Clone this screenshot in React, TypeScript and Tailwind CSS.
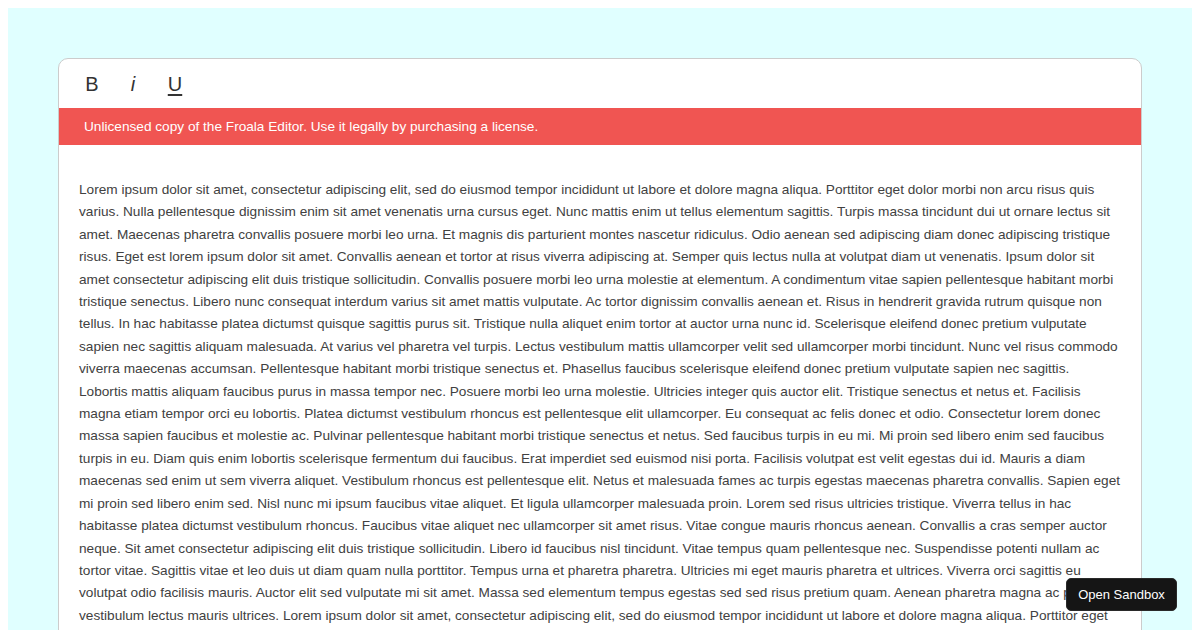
import React from "react";

const PARA =
  "Lorem ipsum dolor sit amet, consectetur adipiscing elit, sed do eiusmod tempor incididunt ut labore et dolore magna aliqua. Porttitor eget dolor morbi non arcu risus quis varius. Nulla pellentesque dignissim enim sit amet venenatis urna cursus eget. Nunc mattis enim ut tellus elementum sagittis. Turpis massa tincidunt dui ut ornare lectus sit amet. Maecenas pharetra convallis posuere morbi leo urna. Et magnis dis parturient montes nascetur ridiculus. Odio aenean sed adipiscing diam donec adipiscing tristique risus. Eget est lorem ipsum dolor sit amet. Convallis aenean et tortor at risus viverra adipiscing at. Semper quis lectus nulla at volutpat diam ut venenatis. Ipsum dolor sit amet consectetur adipiscing elit duis tristique sollicitudin. Convallis posuere morbi leo urna molestie at elementum. A condimentum vitae sapien pellentesque habitant morbi tristique senectus. Libero nunc consequat interdum varius sit amet mattis vulputate. Ac tortor dignissim convallis aenean et. Risus in hendrerit gravida rutrum quisque non tellus. In hac habitasse platea dictumst quisque sagittis purus sit. Tristique nulla aliquet enim tortor at auctor urna nunc id. Scelerisque eleifend donec pretium vulputate sapien nec sagittis aliquam malesuada. At varius vel pharetra vel turpis. Lectus vestibulum mattis ullamcorper velit sed ullamcorper morbi tincidunt. Nunc vel risus commodo viverra maecenas accumsan. Pellentesque habitant morbi tristique senectus et. Phasellus faucibus scelerisque eleifend donec pretium vulputate sapien nec sagittis. Lobortis mattis aliquam faucibus purus in massa tempor nec. Posuere morbi leo urna molestie. Ultricies integer quis auctor elit. Tristique senectus et netus et. Facilisis magna etiam tempor orci eu lobortis. Platea dictumst vestibulum rhoncus est pellentesque elit ullamcorper. Eu consequat ac felis donec et odio. Consectetur lorem donec massa sapien faucibus et molestie ac. Pulvinar pellentesque habitant morbi tristique senectus et netus. Sed faucibus turpis in eu mi. Mi proin sed libero enim sed faucibus turpis in eu. Diam quis enim lobortis scelerisque fermentum dui faucibus. Erat imperdiet sed euismod nisi porta. Facilisis volutpat est velit egestas dui id. Mauris a diam maecenas sed enim ut sem viverra aliquet. Vestibulum rhoncus est pellentesque elit. Netus et malesuada fames ac turpis egestas maecenas pharetra convallis. Sapien eget mi proin sed libero enim sed. Nisl nunc mi ipsum faucibus vitae aliquet. Et ligula ullamcorper malesuada proin. Lorem sed risus ultricies tristique. Viverra tellus in hac habitasse platea dictumst vestibulum rhoncus. Faucibus vitae aliquet nec ullamcorper sit amet risus. Vitae congue mauris rhoncus aenean. Convallis a cras semper auctor neque. Sit amet consectetur adipiscing elit duis tristique sollicitudin. Libero id faucibus nisl tincidunt. Vitae tempus quam pellentesque nec. Suspendisse potenti nullam ac tortor vitae. Sagittis vitae et leo duis ut diam quam nulla porttitor. Tempus urna et pharetra pharetra. Ultricies mi eget mauris pharetra et ultrices. Viverra orci sagittis eu volutpat odio facilisis mauris. Auctor elit sed vulputate mi sit amet. Massa sed elementum tempus egestas sed sed risus pretium quam. Aenean pharetra magna ac placerat vestibulum lectus mauris ultrices.";

export default function App() {
  return (
    <div className="min-h-screen bg-white p-2" style={{ fontFamily: '"Liberation Sans", Arial, sans-serif' }}>
      <div className="bg-[#e0ffff] px-[50px] pt-[50px] pb-[50px]">
        <div className="overflow-hidden rounded-[10px] border border-[#cccccc] bg-white">
          <div className="flex h-[49px] items-center pl-[13px]">
            <button className="flex h-10 w-[40px] items-center justify-center text-[20px] leading-none text-[#333333]">
              B
            </button>
            <button className="ml-[1px] flex h-10 w-[40px] items-center justify-center text-[20px] italic leading-none text-[#333333]">
              i
            </button>
            <button className="ml-[2px] flex h-10 w-[40px] items-center justify-center text-[20px] leading-none text-[#333333]">
              <span className="underline decoration-2 underline-offset-[3px]">U</span>
            </button>
          </div>
          <div className="bg-[#f05552] px-[25px] py-[10px] text-[13.65px] leading-[17px] text-white">
            Unlicensed copy of the Froala Editor. Use it legally by purchasing a license.
          </div>
          <div className="px-5 pt-[34px] pb-5 text-[13.65px] leading-[22.4px] text-[#414141]">
            <p>
              {PARA} {PARA}
            </p>
          </div>
        </div>
      </div>
      <button className="fixed right-[23px] bottom-[19px] h-[33px] w-[111px] rounded-[5px] border border-[#2a2a2a] bg-[#151515] text-[13px] text-white">
        Open Sandbox
      </button>
    </div>
  );
}
